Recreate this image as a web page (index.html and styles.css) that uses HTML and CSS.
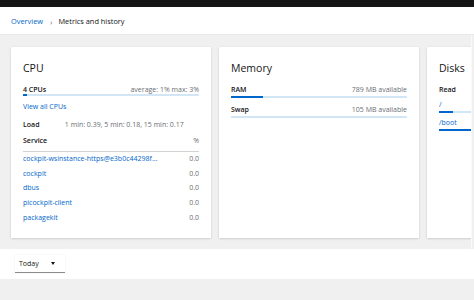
FILE: index.html
```html
<!DOCTYPE html>
<html>
<head>
    <title>Metrics and history</title>
    <link rel="stylesheet" href="styles.css">
</head>
<body>
    <div class="topbar"></div>

    <nav class="breadcrumb">
        <a href="#">Overview</a>
        <span class="sep">&#8250;</span>
        <span class="current">Metrics and history</span>
    </nav>

    <div class="main">
        <div class="cards">
            <div class="card">
                <h2>CPU</h2>
                <div class="row">
                    <b>4 CPUs</b>
                    <span class="muted">average: 1% max: 3%</span>
                </div>
                <div class="bar"><div class="fill" style="width: 2%"></div></div>
                <a href="#" class="link-line">View all CPUs</a>

                <div class="load">
                    <b>Load</b>
                    <span class="muted">1 min: 0.39, 5 min: 0.18, 15 min: 0.17</span>
                </div>

                <div class="row table-head">
                    <b>Service</b>
                    <span class="muted">%</span>
                </div>
                <div class="row svc"><a href="#">cockpit-wsinstance-https@e3b0c44298f…</a><span class="muted">0.0</span></div>
                <div class="row svc"><a href="#">cockpit</a><span class="muted">0.0</span></div>
                <div class="row svc"><a href="#">dbus</a><span class="muted">0.0</span></div>
                <div class="row svc"><a href="#">picockpit-client</a><span class="muted">0.0</span></div>
                <div class="row svc"><a href="#">packagekit</a><span class="muted">0.0</span></div>
            </div>

            <div class="card">
                <h2>Memory</h2>
                <div class="row">
                    <b>RAM</b>
                    <span class="muted">789 MB available</span>
                </div>
                <div class="bar mem-bar"><div class="fill" style="width: 18%"></div></div>
                <div class="row swap">
                    <b>Swap</b>
                    <span class="muted">105 MB available</span>
                </div>
                <div class="bar mem-bar"><div class="fill" style="width: 0%"></div></div>
            </div>

            <div class="card">
                <h2>Disks</h2>
                <div class="row">
                    <b>Read</b>
                </div>
                <div class="disk">
                    <a href="#">/</a>
                    <div class="bar"><div class="fill" style="width: 8%"></div></div>
                </div>
                <div class="disk">
                    <a href="#">/boot</a>
                    <div class="bar"><div class="fill" style="width: 100%"></div></div>
                </div>
            </div>
        </div>
    </div>

    <div class="toolbar">
        <button class="select">Today <span class="caret"></span></button>
    </div>

    <div class="lower"></div>
</body>
</html>
```

FILE: styles.css
```css
body {
    margin: 0;
    font-family: "Open Sans", sans-serif;
    font-size: 7px;
    color: #151515;
    background-color: #f0f0f0;
    overflow: hidden;
}

a {
    color: #0066cc;
    text-decoration: none;
}

b {
    font-weight: 600;
}

.topbar {
    height: 7px;
    background-color: #151515;
}

.breadcrumb {
    height: 28px;
    background-color: #fff;
    display: flex;
    align-items: center;
    padding: 1px 0 0 11px;
    border-bottom: 1px solid #e8e8e8;
    box-sizing: border-box;
    font-size: 7.4px;
}

.breadcrumb .sep {
    color: #6a6e73;
    margin: 0 6px 0 7px;
    font-size: 8px;
}

.main {
    padding: 12px 0 11px 11px;
    overflow: hidden;
    border-right: 1px solid #fafafa;
    margin-right: 2px;
}

.cards {
    display: grid;
    grid-template-columns: 200px 200px 200px;
    gap: 8px;
}

.card {
    background-color: #fff;
    height: 191px;
    padding: 12px;
    box-sizing: border-box;
    box-shadow: 0 1px 2px rgba(3, 3, 3, 0.12), 0 0 2px rgba(3, 3, 3, 0.06);
}

.card h2 {
    font-size: 10.5px;
    font-weight: 400;
    margin: 2px 0 10px;
    line-height: 14px;
}

.row {
    display: flex;
    justify-content: space-between;
    align-items: baseline;
    line-height: 9px;
}

.muted {
    color: #6a6e73;
}

.bar {
    height: 2px;
    background-color: #d2e6f5;
}

.fill {
    height: 100%;
    background-color: #0066cc;
}

.mem-bar {
    margin-top: 2px;
}

.link-line {
    display: block;
    margin-top: 6px;
    line-height: 10px;
}

.load {
    margin-top: 8px;
    line-height: 10px;
}

.load b {
    display: inline-block;
    width: 40px;
}

.table-head {
    margin-top: 6px;
    line-height: 10px;
    padding-bottom: 5px;
    border-bottom: 1px solid #d2d2d2;
}

.svc {
    line-height: 14.7px;
}

.svc a {
    white-space: nowrap;
}

.swap {
    margin-top: 6.5px;
}

.disk {
    margin-top: 6px;
    line-height: 10px;
}

.disk + .disk {
    margin-top: 5.5px;
}

.disk .bar {
    margin-top: 0.5px;
}

.toolbar {
    height: 30px;
    background-color: #fff;
    display: flex;
    align-items: center;
    padding-left: 15px;
}

.select {
    font-family: inherit;
    font-size: 7px;
    color: #151515;
    background: #fff;
    border: none;
    border-bottom: 1px solid #8a8d90;
    width: 50px;
    height: 18px;
    text-align: left;
    padding: 0 4px;
    display: flex;
    align-items: center;
    justify-content: space-between;
    box-shadow: 0 0 1px rgba(0, 0, 0, 0.15);
}

.caret {
    width: 0;
    height: 0;
    border-left: 2.5px solid transparent;
    border-right: 2.5px solid transparent;
    border-top: 3px solid #151515;
    margin-right: 6px;
}

.lower {
    height: 21px;
    background-color: #f0f0f0;
}
```
